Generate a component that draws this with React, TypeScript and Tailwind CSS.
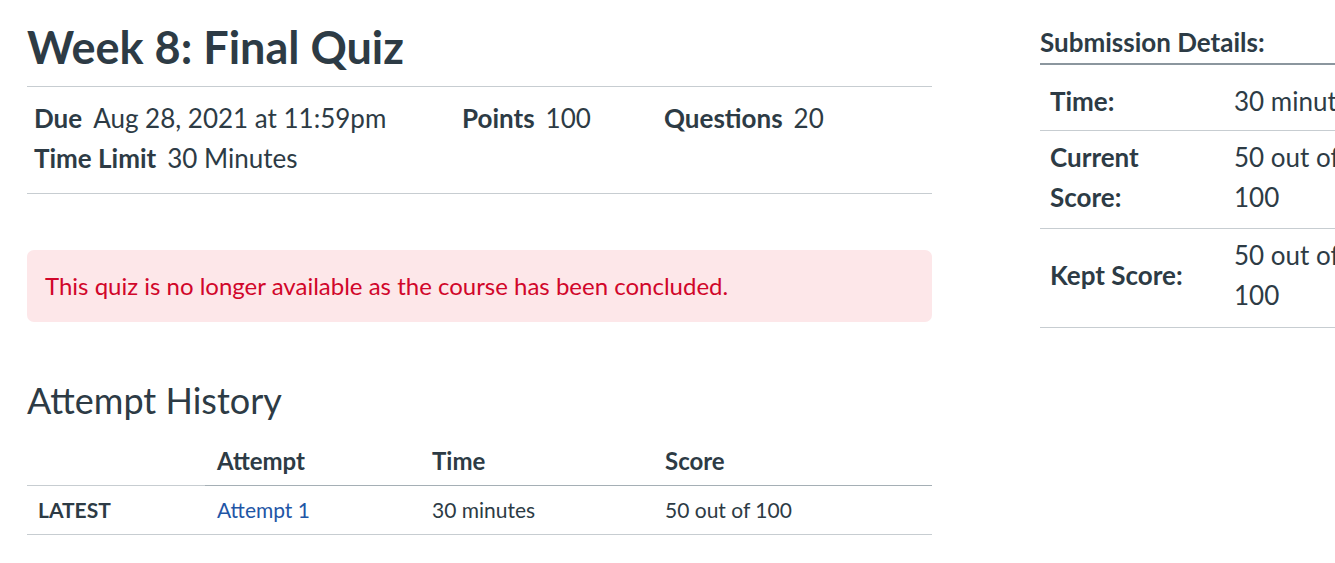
import React from 'react';

const font = { fontFamily: 'Lato, "Noto Sans", sans-serif' };

const detailRows = [
  { label: 'Time:', value: ['30 minutes'], pad: 'pt-[16px] pb-[9px]' },
  { label: 'Current Score:', value: ['50 out of', '100'], pad: 'pt-[6px] pb-[11px]' },
  { label: 'Kept Score:', value: ['50 out of', '100'], pad: 'pt-[6px] pb-[12px]' },
];

const App: React.FC = () => {
  return (
    <div className="w-[1335px] h-[563px] overflow-hidden bg-white text-[#2d3b45]" style={font}>
      <div className="flex">
        <div className="w-[905px] ml-[27px] shrink-0">
          <h1 className="text-[45px] font-bold leading-[54px] pt-[20px] pb-[12px] border-b border-[#c7cdd1]">
            Week 8: Final Quiz
          </h1>

          <div className="border-b border-[#c7cdd1] pt-[11px] pb-[15px] pl-[7px] text-[26px] leading-[40px]">
            <div className="flex">
              <div className="w-[428px]">
                <span className="font-bold mr-[11px]">Due</span>Aug 28, 2021 at 11:59pm
              </div>
              <div className="w-[202px]">
                <span className="font-bold mr-[11px]">Points</span>100
              </div>
              <div>
                <span className="font-bold mr-[11px]">Questions</span>20
              </div>
            </div>
            <div>
              <span className="font-bold mr-[11px]">Time Limit</span>30 Minutes
            </div>
          </div>

          <div className="mt-[56px] h-[72px] rounded-[7px] bg-[#fde7e9] text-[#d1062a] text-[24px] flex items-center pl-[18px]">
            This quiz is no longer available as the course has been concluded.
          </div>

          <h2 className="mt-[54px] text-[36px] font-normal leading-[48px]">Attempt History</h2>

          <table className="mt-[19px] w-full border-collapse text-[21px]">
            <thead>
              <tr className="text-left">
                <th className="w-[178px] border-b border-[#c7cdd1]"></th>
                <th className="w-[215px] pl-[12px] pb-[6px] font-bold text-[24px] leading-[36px] border-b border-[#a5afb5]">Attempt</th>
                <th className="w-[233px] pl-[12px] pb-[6px] font-bold text-[24px] leading-[36px] border-b border-[#a5afb5]">Time</th>
                <th className="pl-[12px] pb-[6px] font-bold text-[24px] leading-[36px] border-b border-[#a5afb5]">Score</th>
              </tr>
            </thead>
            <tbody>
              <tr className="border-b border-[#c7cdd1]">
                <td className="pl-[11px] h-[49px] font-bold text-[21px] uppercase">Latest</td>
                <td className="pl-[12px]">
                  <a className="text-[#1f56a6]">Attempt 1</a>
                </td>
                <td className="pl-[12px]">30 minutes</td>
                <td className="pl-[12px]">50 out of 100</td>
              </tr>
            </tbody>
          </table>
        </div>

        <div className="ml-[108px] w-[330px] shrink-0">
          <h3 className="pt-[26px] pb-[5px] text-[26px] font-bold leading-[32px] border-b-2 border-[#8b969e]">
            Submission Details:
          </h3>
          <table className="w-full border-collapse text-[26px] leading-[40px]">
            <tbody>
              {detailRows.map((row) => (
                <tr key={row.label} className="border-b border-[#c7cdd1]">
                  <th className={`w-[194px] pl-[10px] text-left font-bold align-middle ${row.pad}`}>
                    {row.label === 'Current Score:' ? (
                      <>Current<br />Score:</>
                    ) : (
                      row.label
                    )}
                  </th>
                  <td className={`whitespace-nowrap align-middle ${row.pad}`}>
                    {row.value.map((v, i) => (
                      <div key={i}>{v}</div>
                    ))}
                  </td>
                </tr>
              ))}
            </tbody>
          </table>
        </div>
      </div>
    </div>
  );
};

export default App;
